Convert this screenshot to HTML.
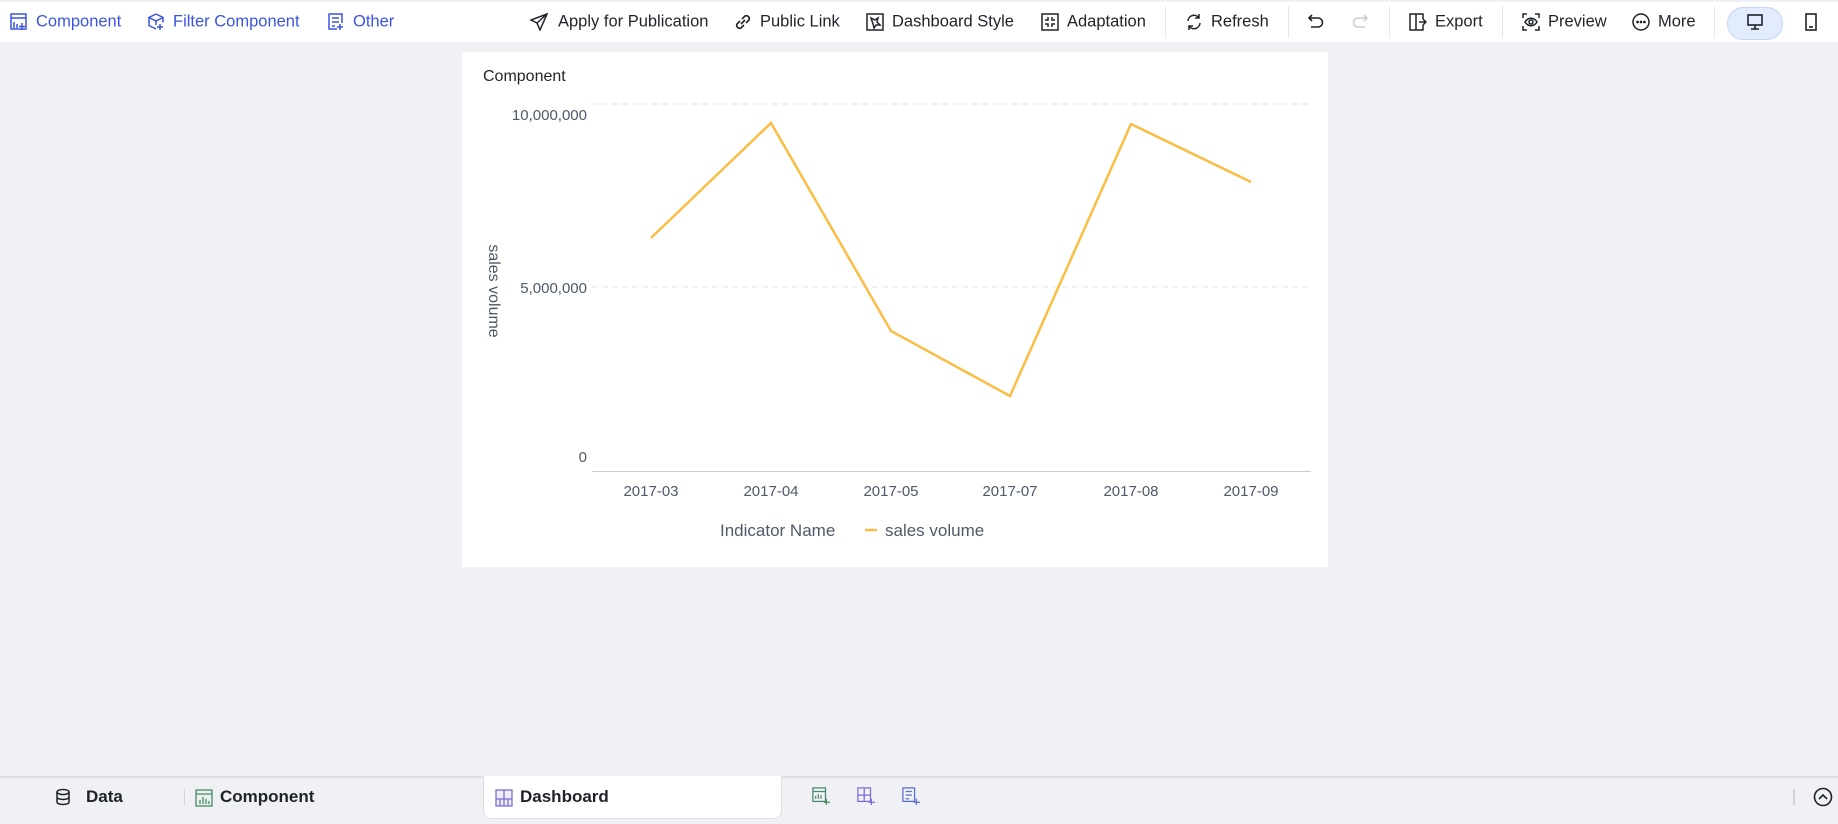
<!DOCTYPE html>
<html><head><meta charset="utf-8"><style>
*{margin:0;padding:0;box-sizing:border-box}
body{width:1838px;height:824px;background:#eff1f5;font-family:"Liberation Sans",Arial,sans-serif;position:relative;overflow:hidden;color:#1f2329}
.top{position:absolute;left:0;top:2px;width:1838px;height:40px;background:#fff}
.t{position:absolute;top:22px;transform:translateY(-50%);font-size:16.5px;white-space:nowrap}
.b{color:#3b54e0}
.ic{position:absolute;top:13px;width:18px;height:18px}
.dv{position:absolute;top:6px;width:1px;height:32px;background:#e5e7eb}
.card{position:absolute;left:462px;top:52px;width:866px;height:515px;background:#fff}
.bot{position:absolute;left:0;top:776px;width:1838px;height:48px;border-top:2px solid #dcdfe6;background:#eff1f5}
.bt{position:absolute;top:797px;transform:translateY(-50%);font-size:17px;font-weight:bold;color:#1f2329}
</style></head><body>
<div class="top"></div>
<svg class="ic" style="left:10px" viewBox="0 0 18 18" fill="none" stroke="#3b54e0" stroke-width="1.5"><rect x="1" y="1" width="15" height="15"/><path d="M1 5h15M4 9v6M7 11v4M12 10v7M9 13.5h6"/></svg>
<div class="t b" style="left:36px">Component</div>
<svg class="ic" style="left:147px" viewBox="0 0 18 18" fill="none" stroke="#3b54e0" stroke-width="1.5"><path d="M9 1l7 3.5v5M9 1L2 4.5v8L9 16M2 4.5l7 3.5 7-3.5M9 8v4"/><path d="M13 11v6M10 14h6"/></svg>
<div class="t b" style="left:173px">Filter Component</div>
<svg class="ic" style="left:327px" viewBox="0 0 18 18" fill="none" stroke="#3b54e0" stroke-width="1.5"><path d="M10 16H2V1h13v9M5 5h7M5 9h7M5 13h3M13 11v6M10 14h6"/></svg>
<div class="t b" style="left:353px">Other</div>
<svg class="ic" style="left:530px" viewBox="0 0 18 18" fill="none" stroke="#1f2329" stroke-width="1.5"><path d="M17 1L1 7l6 3 3 7zM7 10l10-9"/></svg>
<div class="t" style="left:558px">Apply for Publication</div>
<svg class="ic" style="left:734px" viewBox="0 0 18 18" fill="none" stroke="#1f2329" stroke-width="1.6"><path d="M8 6l3-3a3 3 0 014 4l-3 3M10 12l-3 3a3 3 0 01-4-4l3-3M7 11l4-4"/></svg>
<div class="t" style="left:760px">Public Link</div>
<svg class="ic" style="left:866px" viewBox="0 0 18 18" fill="none" stroke="#1f2329" stroke-width="1.5"><rect x="1" y="1" width="16" height="16"/><path d="M5 5l4 2 3-2-1 4 3 3-4 0-2 3-1-4z"/></svg>
<div class="t" style="left:892px">Dashboard Style</div>
<svg class="ic" style="left:1041px" viewBox="0 0 18 18" fill="none" stroke="#1f2329" stroke-width="1.5"><rect x="1" y="1" width="16" height="16"/><path d="M7 4v3H4M11 4v3h3M7 14v-3H4M11 14v-3h3"/></svg>
<div class="t" style="left:1067px">Adaptation</div>
<div class="dv" style="left:1165px"></div>
<svg class="ic" style="left:1185px" viewBox="0 0 18 18" fill="none" stroke="#1f2329" stroke-width="1.5"><path d="M3 8a6 6 0 0111-3M15 10a6 6 0 01-11 3M14 1v4h-4M4 17v-4h4"/></svg>
<div class="t" style="left:1211px">Refresh</div>
<div class="dv" style="left:1288px"></div>
<svg class="ic" style="left:1307px" viewBox="0 0 18 18" fill="none" stroke="#1f2329" stroke-width="1.6"><path d="M5 2L2 5l3 3M2 5h9a4 4 0 010 9H4"/></svg>
<svg class="ic" style="left:1351px" viewBox="0 0 18 18" fill="none" stroke="#c9cdd4" stroke-width="1.6"><path d="M13 2l3 3-3 3M16 5H7a4 4 0 000 9h7"/></svg>
<div class="dv" style="left:1389px"></div>
<svg class="ic" style="left:1409px" viewBox="0 0 18 18" fill="none" stroke="#1f2329" stroke-width="1.5"><path d="M1 1h6v16H1zM7 1h7v5M7 17h7v-5M10 9h7M14 6l3 3-3 3"/></svg>
<div class="t" style="left:1435px">Export</div>
<div class="dv" style="left:1502px"></div>
<svg class="ic" style="left:1522px" viewBox="0 0 18 18" fill="none" stroke="#1f2329" stroke-width="1.5"><path d="M1 5V1h4M13 1h4v4M17 13v4h-4M5 17H1v-4"/><path d="M3 9c3-5 9-5 12 0-3 5-9 5-12 0z"/><circle cx="9" cy="9" r="2"/></svg>
<div class="t" style="left:1548px">Preview</div>
<svg class="ic" style="left:1632px" viewBox="0 0 18 18" fill="none" stroke="#1f2329" stroke-width="1.5"><circle cx="9" cy="9" r="8"/><circle cx="5.5" cy="9" r=".6" fill="#1f2329"/><circle cx="9" cy="9" r=".6" fill="#1f2329"/><circle cx="12.5" cy="9" r=".6" fill="#1f2329"/></svg>
<div class="t" style="left:1658px">More</div>
<div class="dv" style="left:1714px"></div>
<div style="position:absolute;left:1727px;top:7px;width:56px;height:33px;border-radius:16px;background:#e3ecfd;border:1px solid #c7d7f8"></div>
<svg class="ic" style="left:1746px" viewBox="0 0 18 18" fill="none" stroke="#1f2329" stroke-width="1.6"><rect x="2" y="2" width="14" height="10"/><path d="M9 12v4M5 16h8"/></svg>
<svg class="ic" style="left:1802px" viewBox="0 0 18 18" fill="none" stroke="#1f2329" stroke-width="1.6"><rect x="4" y="1" width="10" height="16"/><path d="M7 14h4"/></svg>

<div class="card"></div>
<svg style="position:absolute;left:0;top:0" width="1838" height="824">
<text x="483" y="81" font-family="Liberation Sans,sans-serif" font-size="16" fill="#1f2329">Component</text>
<g stroke="#e5e6eb" stroke-dasharray="6 4"><line x1="592" y1="104" x2="1311" y2="104"/><line x1="592" y1="287" x2="1311" y2="287"/></g>
<line x1="592" y1="471.5" x2="1311" y2="471.5" stroke="#c9cdd4"/>
<g font-family="Liberation Sans,sans-serif" font-size="15" fill="#4e5969" text-anchor="end">
<text x="587" y="120">10,000,000</text><text x="587" y="293">5,000,000</text><text x="587" y="462">0</text></g>
<g font-family="Liberation Sans,sans-serif" font-size="15" fill="#4e5969" text-anchor="middle">
<text x="651" y="496">2017-03</text><text x="771" y="496">2017-04</text><text x="891" y="496">2017-05</text><text x="1010" y="496">2017-07</text><text x="1131" y="496">2017-08</text><text x="1251" y="496">2017-09</text></g>
<text transform="translate(489,291) rotate(90)" text-anchor="middle" font-family="Liberation Sans,sans-serif" font-size="16" fill="#4e5969">sales volume</text>
<polyline points="651,238 771,123 891,331 1010,396 1131,124 1251,182" fill="none" stroke="#fbbd44" stroke-width="2.5"/>
<text x="720" y="536" font-family="Liberation Sans,sans-serif" font-size="17" fill="#4e5969">Indicator Name</text>
<line x1="865" y1="530" x2="877" y2="530" stroke="#fbbd44" stroke-width="2.5"/>
<text x="885" y="536" font-family="Liberation Sans,sans-serif" font-size="17" fill="#4e5969">sales volume</text>
</svg>

<div class="bot"></div>
<div style="position:absolute;left:483px;top:776px;width:299px;height:43px;background:#fff;border-radius:0 0 8px 8px;border:1px solid #dcdfe6;border-top:none"></div>
<svg class="ic" style="left:54px;top:788px" viewBox="0 0 18 18" fill="none" stroke="#1f2329" stroke-width="1.5"><ellipse cx="9" cy="4" rx="6" ry="2.5"/><path d="M3 4v10c0 3.3 12 3.3 12 0V4M3 9c0 3.3 12 3.3 12 0"/></svg>
<div class="bt" style="left:86px">Data</div>
<div style="position:absolute;left:184px;top:789px;width:1px;height:16px;background:#d0d3d9"></div>
<svg class="ic" style="left:195px;top:789px" viewBox="0 0 18 18" fill="none" stroke="#4a8a6a" stroke-width="1.3"><rect x="1" y="1" width="16" height="16" fill="#e8f1ec"/><path d="M1 5h16M5 15v-4M8 15V8M11 15v-5M14 15v-3"/></svg>
<div class="bt" style="left:220px">Component</div>
<svg class="ic" style="left:495px;top:789px" viewBox="0 0 18 18" fill="none" stroke="#7b6cd9" stroke-width="1.3"><rect x="1" y="1" width="16" height="16" fill="#efedfb"/><path d="M9 1v16M1 10h16M5 10v7M13 10v7"/></svg>
<div class="bt" style="left:520px">Dashboard</div>
<svg class="ic" style="left:812px;top:787px" viewBox="0 0 20 20" fill="none" stroke="#4a8a6a" stroke-width="1.4"><rect x="1" y="1" width="14" height="15"/><path d="M1 5h14M4 13v-3M7 13V8M10 13v-4M16 13v7M13 17h7"/></svg>
<svg class="ic" style="left:857px;top:787px" viewBox="0 0 20 20" fill="none" stroke="#7b6cd9" stroke-width="1.4"><rect x="1" y="1" width="14" height="15"/><path d="M8 1v15M1 9h14M16 13v7M13 17h7"/></svg>
<svg class="ic" style="left:902px;top:787px" viewBox="0 0 20 20" fill="none" stroke="#5a70c8" stroke-width="1.4"><rect x="1" y="1" width="13" height="15"/><path d="M4 5h7M4 9h7M4 13h4M16 13v7M13 17h7"/></svg>
<div style="position:absolute;left:1793px;top:789px;width:2px;height:16px;background:#d0d3d9"></div>
<svg class="ic" style="left:1813px;top:787px;width:20px;height:20px" viewBox="0 0 20 20" fill="none" stroke="#1f2329" stroke-width="1.6"><circle cx="10" cy="10" r="8.5"/><path d="M6 12l4-4 4 4"/></svg>
</body></html>
